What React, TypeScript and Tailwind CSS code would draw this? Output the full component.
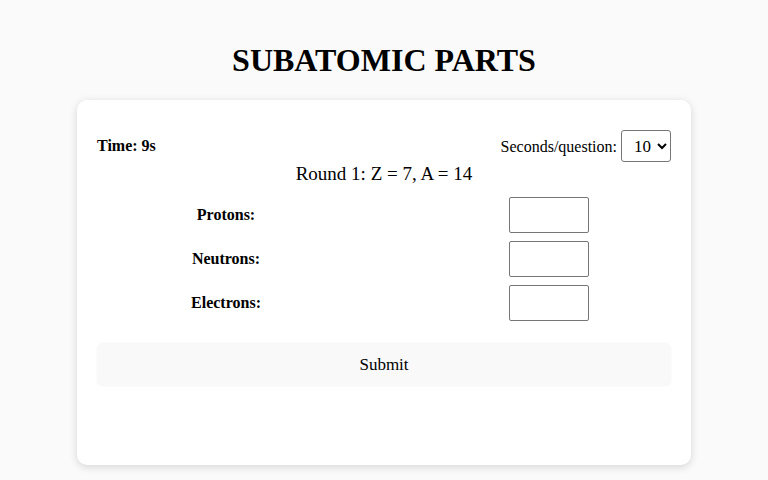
import { useState } from "react";

const rows = ["Protons", "Neutrons", "Electrons"];

export default function App() {
  const [secs, setSecs] = useState("10");

  return (
    <div className="min-h-[480px] bg-[#fafafa] pt-[42px] font-['Liberation_Serif',serif] text-black">
      <h1 className="text-center text-[32px] font-bold leading-[37px]">SUBATOMIC PARTS</h1>
      <div className="mx-auto mt-[21px] h-[365px] w-[614px] rounded-[10px] bg-white px-5 pt-[30px] shadow-[0_2px_8px_rgba(0,0,0,0.15)]">
        <div className="flex h-8 items-center justify-between">
          <span className="text-[16px] font-bold">Time: 9s</span>
          <label className="flex items-center gap-1 text-[16px]">
            <span className="translate-y-[1px]">Seconds/question:</span>
            <select
              value={secs}
              onChange={(e) => setSecs(e.target.value)}
              className="h-8 w-[50px] rounded-[3px] border border-[#767676] bg-white pl-2 text-[17px]"
            >
              <option>5</option>
              <option>10</option>
              <option>15</option>
              <option>20</option>
            </select>
          </label>
        </div>
        <p className="mt-[1px] text-center text-[19px] leading-[22px]">Round 1: Z = 7, A = 14</p>
        <div className="mt-[8px] flex flex-col">
          {rows.map((r) => (
            <div key={r} className="flex h-[44px] items-center">
              <span className="w-[258px] text-center text-[16px] font-bold">{r}:</span>
              <input className="ml-[154px] h-9 w-20 rounded-[2px] border border-[#767676] bg-white" />
            </div>
          ))}
        </div>
        <button className="mt-[18px] h-[43px] w-full rounded-[6px] bg-[#f9f9f9] text-[17px] shadow-[0_0_2px_rgba(0,0,0,0.06)]">
          Submit
        </button>
      </div>
    </div>
  );
}
